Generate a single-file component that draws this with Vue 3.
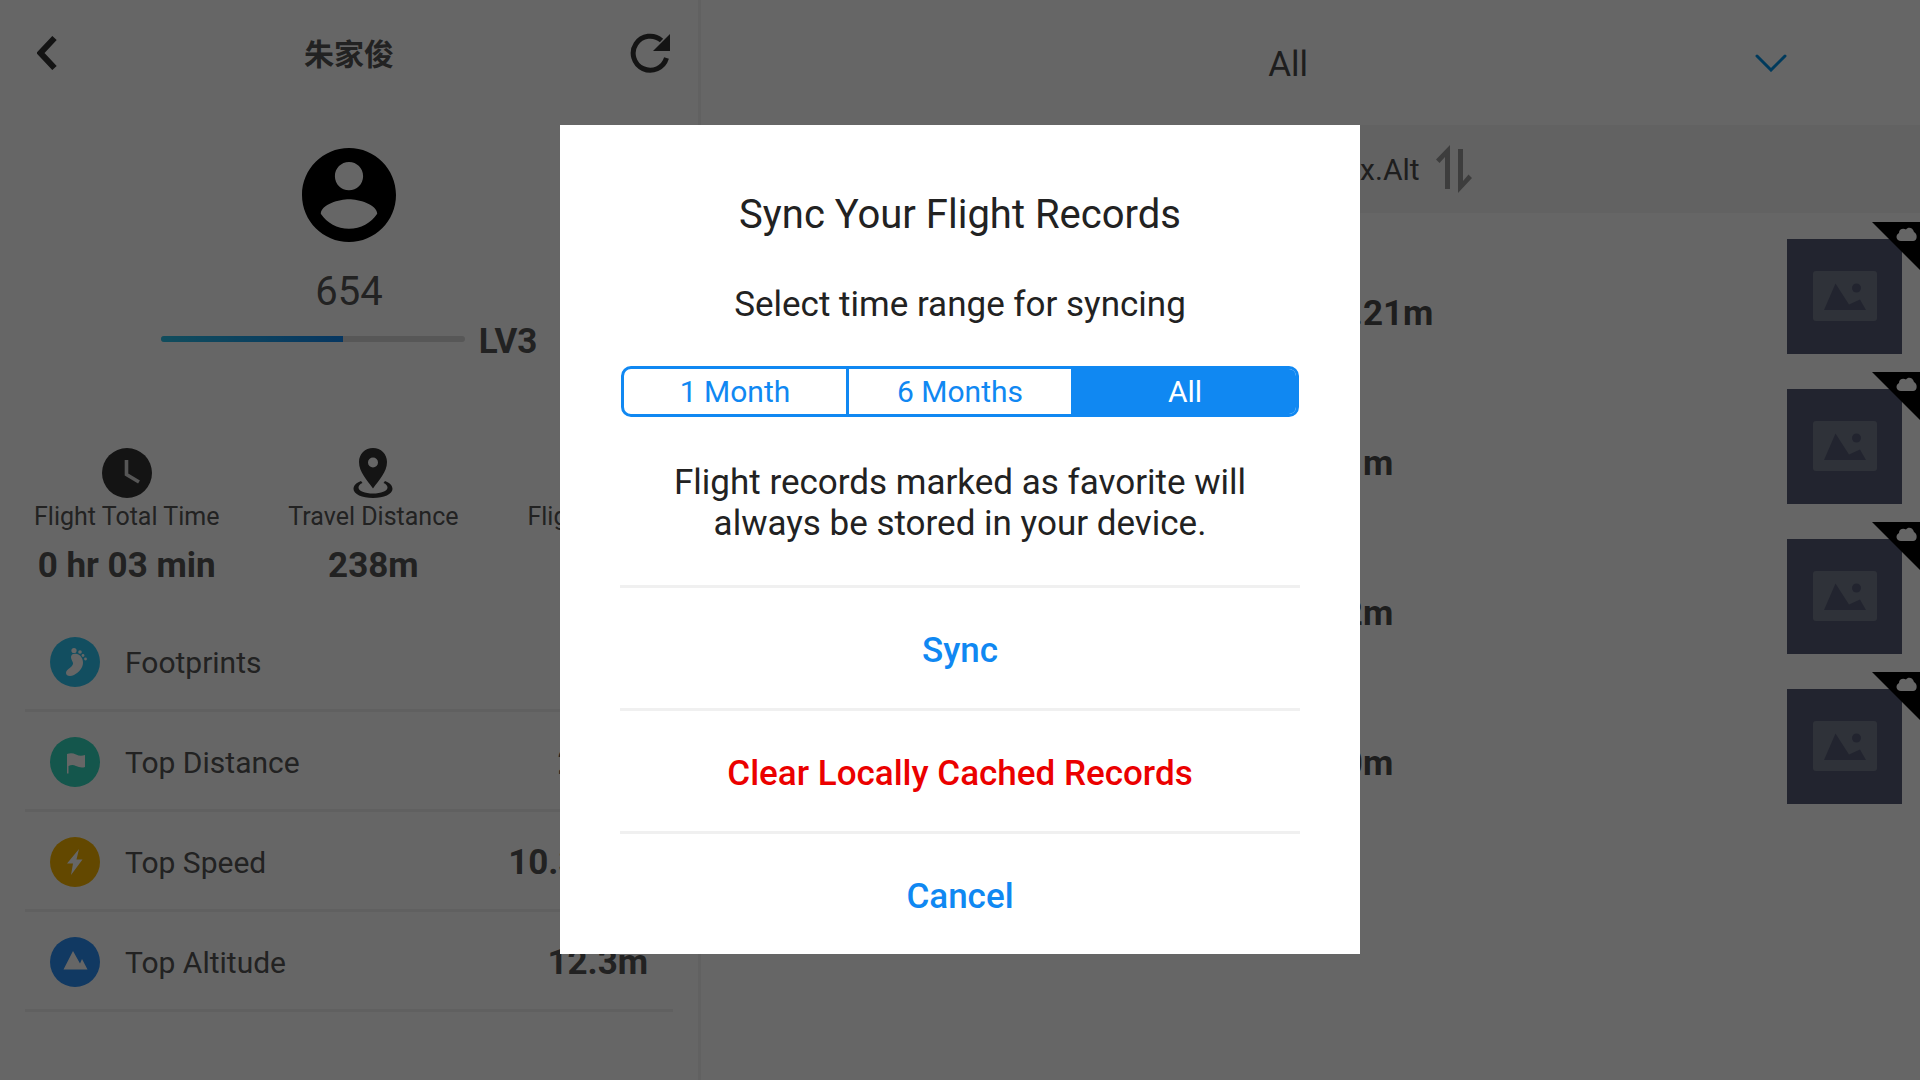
<script setup>
import { ref } from 'vue'

const range = ref('All')
const ranges = ['1 Month', '6 Months', 'All']
const filter = ref('All')
const progress = ref(60)

const tops = [
    { icon: 'foot', label: 'Footprints', value: '' },
    { icon: 'flag', label: 'Top Distance', value: '238m' },
    { icon: 'bolt', label: 'Top Speed', value: '10.3mph' },
    { icon: 'peak', label: 'Top Altitude', value: '12.3m' }
]

const records = ['12.21m', '1.1m', '1.2m', '1.0m']
</script>

<template>
    <div class="page">
        <aside class="profile">
            <header class="bar">
                <button class="icon-btn back" type="button" aria-label="Back">
                    <svg width="20" height="34" viewBox="0 0 20 34">
                        <path d="M17.500 2 3.500 17l14 15" fill="none" stroke="#333" stroke-width="6" />
                    </svg>
                </button>
                <h1>朱家俊</h1>
                <button class="icon-btn refresh" type="button" aria-label="Refresh">
                    <svg width="40" height="40" viewBox="0 0 40 40">
                        <path d="M36.500 25A17 17 0 1 1 31.500 7.500" fill="none" stroke="#333" stroke-width="5" />
                        <path d="M40 1v17H23z" fill="#333" />
                    </svg>
                </button>
            </header>

            <div class="user">
                <svg width="94" height="94" viewBox="2 2 20 20">
                    <path fill="#000" d="M12 2C6.480 2 2 6.480 2 12s4.480 10 10 10 10-4.480 10-10S17.520 2 12 2zm0 3c1.660 0 3 1.340 3 3s-1.340 3-3 3-3-1.340-3-3 1.340-3 3-3zm0 14.200c-2.500 0-4.710-1.280-6-3.220.030-1.990 4-3.080 6-3.080 1.990 0 5.970 1.090 6 3.080-1.290 1.940-3.500 3.220-6 3.220z" />
                </svg>
                <p class="points">654</p>
                <div class="level">
                    <div class="track">
                        <div class="fill" :style="{ width: progress + '%' }"></div>
                    </div>
                    <strong>LV3</strong>
                </div>
            </div>

            <div class="stats">
                <div class="stat">
                    <svg width="50" height="50" viewBox="0 0 50 50">
                        <circle cx="25" cy="25" r="25" fill="#333" />
                        <path d="M24.500 12v14.500L37 34" fill="none" stroke="#fff" stroke-opacity=".8" stroke-width="3.600" />
                    </svg>
                    <span>Flight Total Time</span>
                    <strong>0 hr 03 min</strong>
                </div>
                <div class="stat">
                    <svg width="50" height="50" viewBox="0 0 50 50">
                        <path fill="#333" fill-rule="evenodd" d="M25 0c8 0 14 6 14 14C39 24 31 32 25 40.500 19 32 11 24 11 14 11 6 17 0 25 0zm0 9.500a5 5 0 1 0 0 10 5 5 0 0 0 0-10z" />
                        <path fill="#333" d="M13 33c-4.500 1.500-7.500 4.500-7.500 8C5.500 46 14 50 25 50s19.500-4 19.500-9c0-3.500-3-6.500-7.500-8l-1.500 2c2.500 1 4 2.700 4 4.500C39.500 43 33 45.500 25 45.500S10.500 43 10.500 39.500c0-1.800 1.500-3.500 4-4.500z" />
                    </svg>
                    <span>Travel Distance</span>
                    <strong>238m</strong>
                </div>
                <div class="stat">
                    <svg width="50" height="50" viewBox="0 0 50 50">
                        <circle cx="25" cy="25" r="25" fill="#333" />
                        <path d="M12 38 25 10l13 28-13-7z" fill="#fff" />
                    </svg>
                    <span>Flight Times</span>
                    <strong>4</strong>
                </div>
            </div>

            <ul class="tops">
                <li v-for="item in tops" :key="item.label">
                    <svg class="round" :class="item.icon" width="50" height="50" viewBox="0 0 50 50">
                        <g v-if="item.icon === 'foot'">
                            <path d="M21 20c0-3 3-4 6-3 4 1 6 5 6 9 0 5-5 10-9 12-4 2-8 1-8-2 0-4 6-5 7-9 .500-2-2-4-2-7z" />
                            <circle cx="24" cy="13.500" r="2.600" />
                            <circle cx="30" cy="15" r="1.800" />
                            <circle cx="33" cy="18.500" r="1.400" />
                            <circle cx="35.500" cy="22" r="1.400" />
                        </g>
                        <path v-else-if="item.icon === 'flag'" d="M17 36.500V17c3-1 6-1 9 .500s6 1.500 9 .500v12c-3 1-6 .500-9-1s-5-1-7.500 0v7.500z" />
                        <path v-else-if="item.icon === 'bolt'" d="M29 12 17 26.500h6L21 38l11.500-15.500h-6z" />
                        <path v-else d="M13.500 32.500 23 14l7 12.500L32 22l5.500 10.500z" />
                    </svg>
                    <span>{{ item.label }}</span>
                    <strong>{{ item.value }}</strong>
                </li>
            </ul>
        </aside>

        <main class="records">
            <div class="filter">
                <select v-model="filter" aria-label="Filter">
                    <option>All</option>
                </select>
                <svg width="32" height="18" viewBox="0 0 32 18">
                    <path d="M2 2l14 14L30 2" fill="none" stroke="#0091e6" stroke-width="3" stroke-linecap="round" />
                </svg>
            </div>

            <table>
                <thead>
                    <tr>
                        <th class="first"></th>
                        <th>
                            <button class="sort" type="button">
                                Max.Alt
                                <svg width="36" height="48" viewBox="0 0 36 48">
                                    <path d="M14 0v44H9V12l-5.500 6L0 14.500zM22 48V4h5v32l5.500-6.500L36 33z" fill="#999" />
                                </svg>
                            </button>
                        </th>
                        <th class="last"></th>
                    </tr>
                </thead>
                <tbody>
                    <tr v-for="alt in records" :key="alt">
                        <td></td>
                        <td class="alt">{{ alt }}</td>
                        <td class="pic">
                            <div class="thumb">
                                <svg width="64" height="50" viewBox="0 0 64 50">
                                    <rect width="64" height="50" rx="3" fill="#757d8e" />
                                    <path d="M11 39 22.500 12.500 36 33.500l11-5L53 39z" fill="#555a76" />
                                    <circle cx="43.500" cy="17" r="4.500" fill="#555a76" />
                                </svg>
                            </div>
                            <svg class="cloud" width="48" height="48" viewBox="0 0 48 48">
                                <path d="M0 0h48v48z" fill="#000" />
                                <path d="M29 19c-5 0-6-6-2-8 0-4 4-5 7-3.500C36 4.500 41 5.500 42 10c4 2 3.500 9-1 9z" fill="#fff" />
                            </svg>
                        </td>
                    </tr>
                </tbody>
            </table>
        </main>
    </div>

    <div class="mask">
        <section class="dialog" role="dialog" aria-modal="true" aria-labelledby="dialog-title">
            <h2 id="dialog-title">Sync Your Flight Records</h2>
            <p class="hint">Select time range for syncing</p>
            <div class="segments">
                <button
                    v-for="item in ranges"
                    :key="item"
                    type="button"
                    :class="{ active: range === item }"
                    @click="range = item"
                >{{ item }}</button>
            </div>
            <p class="note">Flight records marked as favorite will always be stored in your device.</p>
            <button class="action" type="button">Sync</button>
            <button class="action danger" type="button">Clear Locally Cached Records</button>
            <button class="action" type="button">Cancel</button>
        </section>
    </div>
</template>

<style>
body {
    margin: 0;
    background: #fff;
}
</style>

<style scoped>
.page,
.mask {
    font-family: Roboto, "Noto Sans CJK SC", sans-serif;
    box-sizing: border-box;
}

.page {
    display: grid;
    grid-template-columns: 4fr 7fr;
    min-height: 100vh;
    color: #555;
}

h1, h2, p, ul {
    margin: 0;
    padding: 0;
}

svg {
    display: block;
    flex-shrink: 0;
}

button,
select {
    font-family: inherit;
    background: none;
    border: 0;
    padding: 0;
    cursor: pointer;
}

.bar {
    display: grid;
    grid-template-columns: 1fr auto 1fr;
    align-items: center;
    height: 106px;
    padding: 0 28px;
}

.bar h1 {
    padding-top: 4px;
    font-size: 30px;
    line-height: 40px;
    font-weight: 700;
}

.back {
    justify-self: start;
    padding-left: 9px;
}

.refresh {
    justify-self: end;
}

.user {
    display: flex;
    flex-direction: column;
    align-items: center;
    padding-top: 42px;
}

.points {
    margin-top: 26px;
    font-size: 40px;
    line-height: 47px;
}

.level {
    display: flex;
    gap: 14px;
    margin-top: 6px;
}

.track {
    width: 304px;
    height: 6px;
    margin-top: 15px;
    border-radius: 3px;
    background: #d9d9d9;
    overflow: hidden;
}

.fill {
    height: 100%;
    background: linear-gradient(to right, #2bc0e8, #1088f2);
}

strong {
    font-size: 35px;
    line-height: 41px;
    font-weight: 700;
}

.stats {
    display: flex;
    justify-content: space-between;
    margin-top: 86px;
    padding: 0 34px;
}

.stat {
    display: flex;
    flex-direction: column;
    align-items: center;
    white-space: nowrap;
}

.stat span {
    margin-top: 4px;
    font-size: 25px;
    line-height: 29px;
}

.stat strong {
    margin-top: 14px;
}

.tops {
    margin: 26px 25px 0;
    list-style: none;
}

.tops li {
    display: flex;
    align-items: center;
    gap: 25px;
    box-sizing: border-box;
    height: 100px;
    padding: 3px 25px 0;
    border-bottom: 3px solid #f0f0f0;
    font-size: 30px;
}

.tops strong {
    margin-left: auto;
}

.round {
    border-radius: 50%;
    fill: #fff;
}

.foot { background: #2fc4f0; }
.flag { background: #32d6bd; }
.bolt { background: #f7b500; }
.peak { background: #2b8ff5; }

.records {
    border-left: 3px solid #f2f2f2;
    color: #4b4b4b;
}

.filter {
    display: flex;
    align-items: center;
    height: 125px;
    padding: 0 133px 0 120px;
}

.filter select {
    flex: 1;
    height: 60px;
    padding-top: 4px;
    appearance: none;
    font-size: 35px;
    text-align: center;
    text-align-last: center;
    color: inherit;
}

table {
    width: 100%;
    table-layout: fixed;
    border-collapse: collapse;
}

th,
td {
    padding: 0;
    text-align: left;
}

th {
    height: 88px;
    background: #f5f5f5;
}

.first { width: 50%; }
.last { width: 133px; }

.sort {
    display: flex;
    align-items: center;
    gap: 16px;
    padding-left: 7px;
    font-size: 30px;
    color: inherit;
}

tbody::before {
    content: "";
    display: block;
    height: 9px;
}

td {
    height: 150px;
}

.alt {
    padding: 32px 0 0 2px;
    height: 118px;
    font-size: 35px;
    font-weight: 700;
}

.pic {
    position: relative;
    height: 148px;
    padding-bottom: 2px;
}

.thumb {
    display: flex;
    align-items: center;
    justify-content: center;
    width: 115px;
    height: 115px;
    background: #555a76;
}

.cloud {
    position: absolute;
    top: 0;
    right: 0;
}

.mask {
    position: fixed;
    inset: 0;
    display: flex;
    align-items: center;
    justify-content: center;
    padding-bottom: 1px;
    background: rgba(0, 0, 0, .6);
}

.dialog {
    display: flex;
    flex-direction: column;
    box-sizing: border-box;
    width: 800px;
    max-width: 90vw;
    padding: 66px 60px 0;
    background: #fff;
    color: #222;
    text-align: center;
}

.dialog h2 {
    font-size: 40px;
    line-height: 47px;
    font-weight: 400;
}

.hint,
.note {
    font-size: 35px;
    line-height: 41px;
}

.hint {
    margin-top: 46px;
}

.segments {
    display: flex;
    margin: 41px 1px 0;
    border: 3px solid #1088f2;
    border-radius: 10px;
    overflow: hidden;
}

.segments button {
    flex: 1;
    height: 45px;
    font-size: 30px;
    color: #1088f2;
}

.segments button:not(:last-child) {
    border-right: 3px solid #1088f2;
}

.segments .active {
    background: #1088f2;
    color: #fff;
}

.note {
    margin: 45px 40px 41px;
}

.action {
    height: 123px;
    padding-top: 4px;
    border-top: 3px solid #f0f0f0;
    font-size: 35px;
    font-weight: 500;
    color: #1088f2;
}

.danger {
    color: #eb0000;
}
</style>
